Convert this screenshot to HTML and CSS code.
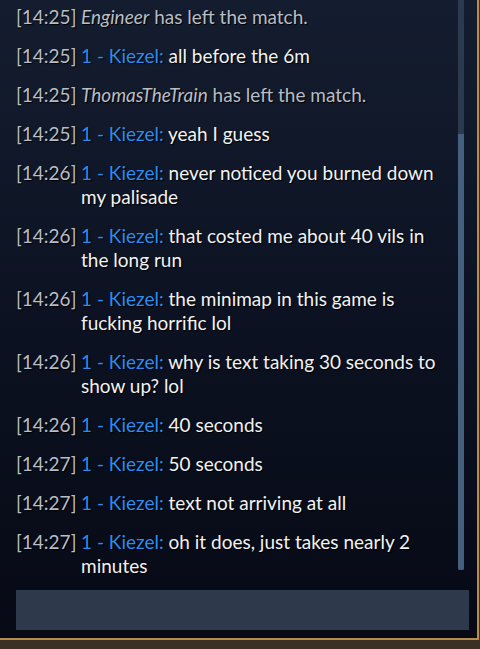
FILE: index.html
```html
<!DOCTYPE html>
<html lang="en">
<head>
    <meta charset="UTF-8">
    <meta name="viewport" content="width=device-width, initial-scale=1.0">
    <title>Match Chat</title>
    <link rel="stylesheet" href="styles.css">
</head>
<body>
    <div class="panel">
        <div class="log">
            <div class="messages">
                <div class="msg system"><span class="time">[14:25]</span><span class="text"><em>Engineer</em> has left the match.</span></div>
                <div class="msg"><span class="time">[14:25]</span><span class="text"><span class="name">1 - Kiezel:</span> all before the 6m</span></div>
                <div class="msg system"><span class="time">[14:25]</span><span class="text"><em>ThomasTheTrain</em> has left the match.</span></div>
                <div class="msg"><span class="time">[14:25]</span><span class="text"><span class="name">1 - Kiezel:</span> yeah I guess</span></div>
                <div class="msg"><span class="time">[14:26]</span><span class="text"><span class="name">1 - Kiezel:</span> never noticed you burned down my palisade</span></div>
                <div class="msg"><span class="time">[14:26]</span><span class="text"><span class="name">1 - Kiezel:</span> that costed me about 40 vils in the long run</span></div>
                <div class="msg"><span class="time">[14:26]</span><span class="text"><span class="name">1 - Kiezel:</span> the minimap in this game is fucking horrific lol</span></div>
                <div class="msg"><span class="time">[14:26]</span><span class="text"><span class="name">1 - Kiezel:</span> why is text taking 30 seconds to show up? lol</span></div>
                <div class="msg"><span class="time">[14:26]</span><span class="text"><span class="name">1 - Kiezel:</span> 40 seconds</span></div>
                <div class="msg"><span class="time">[14:27]</span><span class="text"><span class="name">1 - Kiezel:</span> 50 seconds</span></div>
                <div class="msg"><span class="time">[14:27]</span><span class="text"><span class="name">1 - Kiezel:</span> text not arriving at all</span></div>
                <div class="msg"><span class="time">[14:27]</span><span class="text"><span class="name">1 - Kiezel:</span> oh it does, just takes nearly 2 minutes</span></div>
            </div>
            <div class="scrollbar">
                <div class="thumb"></div>
            </div>
        </div>
        <div class="input"></div>
    </div>
</body>
</html>
```

FILE: styles.css
```css
body {
    margin: 0;
    background-color: #3b3024;
    font-family: Lato, "Noto Sans", sans-serif;
}
.panel {
    width: 477px;
    height: 638px;
    border-right: 2px solid #b68d4c;
    border-bottom: 2px solid #b68d4c;
    background: linear-gradient(#141d2f, #0c1222 50%, #070a15);
    display: flex;
    flex-direction: column;
}
.log {
    display: flex;
    height: 570px;
}
.messages {
    width: 436px;
    padding-left: 16px;
    padding-right: 6px;
    padding-top: 5px;
    display: flex;
    flex-direction: column;
    gap: 15px;
}
.msg {
    display: grid;
    grid-template-columns: 65px 1fr;
    font-size: 19px;
    line-height: 24px;
    color: #f2f2f2;
    text-shadow: 1px 1px 1px #000;
}
.time {
    color: #b9bdc5;
}
.name {
    color: #2b8df2;
}
.system .text {
    color: #b9bdc5;
}
.scrollbar {
    width: 6px;
    height: 570px;
    background-color: #2b3a4f;
    display: flex;
    flex-direction: column;
    justify-content: flex-end;
}
.thumb {
    height: 436px;
    background-color: #45607f;
    border-radius: 0 0 3px 3px;
}
.input {
    margin: 20px 8px 0 16px;
    height: 40px;
    background-color: #2e3a4c;
}
```
